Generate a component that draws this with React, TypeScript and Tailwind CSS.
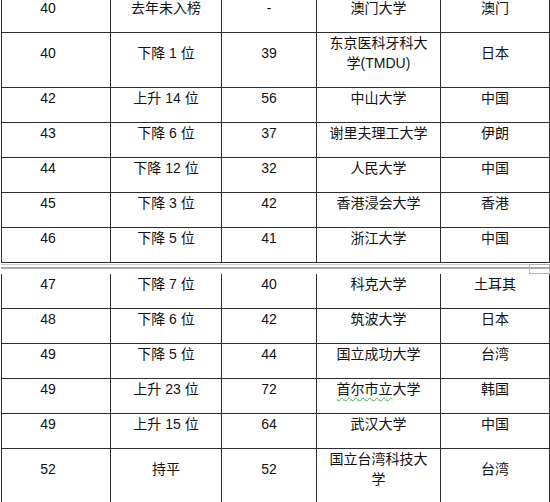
import React from 'react';

type Row = { rank: string; change: string; last: string; school: React.ReactNode; region: string };

const topRows: Row[] = [
    { rank: '40', change: '去年未入榜', last: '-', school: '澳门大学', region: '澳门' },
    {
        rank: '40',
        change: '下降 1 位',
        last: '39',
        school: (
            <>
                东京医科牙科大
                <br />
                学(TMDU)
            </>
        ),
        region: '日本',
    },
    { rank: '42', change: '上升 14 位', last: '56', school: '中山大学', region: '中国' },
    { rank: '43', change: '下降 6 位', last: '37', school: '谢里夫理工大学', region: '伊朗' },
    { rank: '44', change: '下降 12 位', last: '32', school: '人民大学', region: '中国' },
    { rank: '45', change: '下降 3 位', last: '42', school: '香港浸会大学', region: '香港' },
    { rank: '46', change: '下降 5 位', last: '41', school: '浙江大学', region: '中国' },
];

const bottomRows: Row[] = [
    { rank: '47', change: '下降 7 位', last: '40', school: '科克大学', region: '土耳其' },
    { rank: '48', change: '下降 6 位', last: '42', school: '筑波大学', region: '日本' },
    { rank: '49', change: '下降 5 位', last: '44', school: '国立成功大学', region: '台湾' },
    {
        rank: '49',
        change: '上升 23 位',
        last: '72',
        school: (
            <>
                <span className="underline decoration-wavy decoration-[#3fae49] decoration-1 underline-offset-[3px]">首尔市立</span>
                大学
            </>
        ),
        region: '韩国',
    },
    { rank: '49', change: '上升 15 位', last: '64', school: '武汉大学', region: '中国' },
    {
        rank: '52',
        change: '持平',
        last: '52',
        school: (
            <>
                国立台湾科技大
                <br />
                学
            </>
        ),
        region: '台湾',
    },
];

function Cell({ children, first }: { children: React.ReactNode; first?: boolean }) {
    return (
        <div className={`flex items-center justify-center border-r border-b border-[#2e2e2e] text-center ${first ? 'pr-[16px]' : ''}`}>
            <div className="pb-[14px] leading-[20px]">{children}</div>
        </div>
    );
}

function Section({ rows, top }: { rows: Row[]; top?: boolean }) {
    return (
        <div
            className={`grid grid-cols-[109px_111px_95px_124px_109px] border-l border-[#2e2e2e] ${top ? 'border-t' : ''}`}
        >
            {rows.map((r, i) => (
                <React.Fragment key={i}>
                    <Cell first>{r.rank}</Cell>
                    <Cell>{r.change}</Cell>
                    <Cell>{r.last}</Cell>
                    <Cell>{r.school}</Cell>
                    <Cell>{r.region}</Cell>
                </React.Fragment>
            ))}
        </div>
    );
}

export default function App() {
    return (
        <div className="h-[502px] w-[550px] overflow-hidden bg-white font-['Liberation_Sans','Noto_Sans_CJK_SC',sans-serif] text-[14px] text-[#111]">
            <div className="-mt-[3px] ml-[1px]">
                <Section rows={topRows} top />
                {/* page break */}
                <div className="relative h-[10px]">
                    <div className="mt-[1px] h-[1px] bg-[#c9c9c9]" />
                    <div className="mt-[2px] h-[2px] bg-[#a8a8a8]" />
                    <div className="absolute right-0 top-0 h-[10px] w-[21px] border border-[#b4b4b4]" />
                </div>
                <Section rows={bottomRows} />
            </div>
        </div>
    );
}
